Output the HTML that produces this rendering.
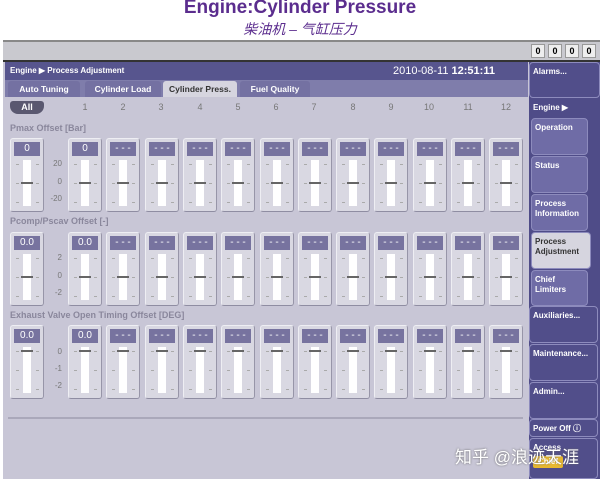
<!DOCTYPE html>
<html><head><meta charset="utf-8"><style>
*{margin:0;padding:0;box-sizing:border-box}
body{width:600px;height:479px;overflow:hidden;background:#fff;font-family:"Liberation Sans",Arial,sans-serif;position:relative}
.a{position:absolute}
.t1{left:0;width:600px;top:-3px;text-align:center;color:#5b2d8e;font-weight:bold;font-size:19px}
.t2{left:0;width:600px;top:19px;text-align:center;color:#5b2d8e;font-style:italic;font-size:14px;font-family:"Liberation Sans","Noto Sans CJK SC",sans-serif}
.frame{left:3px;top:40px;width:597px;height:439px;background:#c8c6d6}
.topbar{left:3px;top:40px;width:597px;height:22px;background:#c9c9cf;border-top:2px solid #888;border-bottom:2px solid #333}
.cnt{top:44px;width:14px;height:14px;background:#eee;border:1px solid #999;font-size:9px;font-weight:bold;text-align:center;line-height:12px}
.hdr{left:5px;top:62px;width:523px;height:18px;background:#57558e;color:#fff;font-size:8px;font-weight:bold;line-height:18px;padding-left:5px}
.tabs{left:5px;top:80px;width:523px;height:17px;background:#7f7dab}
.tab{top:81px;height:16px;background:#7471a2;color:#fff;font-size:8.5px;font-weight:bold;text-align:center;line-height:16px;border-radius:3px 3px 0 0}
.num{top:102px;width:30px;text-align:center;font-size:9px;color:#777}
.lbl{left:10px;font-size:9px;font-weight:bold;color:#8a879c}
.b{width:34px;height:74px;background:#d9d8e2;border:1px solid #eeeef3;border-right-color:#9795a8;border-bottom-color:#8f8da2;border-radius:3px}
.b .v{position:absolute;left:3px;top:3px;width:26px;height:14px;background:#77739f;color:#fff;font-size:10px;text-align:center;line-height:14px}
.b .tr{position:absolute;left:12px;top:21px;width:8px;height:46px;background:#fff}
.b .k{position:absolute;width:3px;height:1px;background:#aaa}
.b .m{position:absolute;left:10px;width:12px;height:2px;background:#666}
.sc{font-size:8px;color:#777;width:20px;text-align:right}
.sb{left:529px;width:71px;background:#4f4c88}
.btn{left:531px;width:57px;background:#6f6ca6;border-radius:4px;color:#fff;font-size:8px;font-weight:bold;padding:4px 3px;line-height:10px;border:1px solid #8d8bbd}
</style></head><body>
<div class="a t1">Engine:Cylinder Pressure</div>
<div class="a t2">柴油机 – 气缸压力</div>
<div class="a frame"></div>
<div class="a topbar"></div>
<div class="a cnt" style="left:531px">0</div><div class="a cnt" style="left:548px">0</div><div class="a cnt" style="left:565px">0</div><div class="a cnt" style="left:582px">0</div>
<div class="a hdr">Engine ▶ Process Adjustment<span style="position:absolute;left:388px;font-weight:normal;font-size:11px">2010-08-11 <b>12:51:11</b></span></div>
<div class="a tabs"></div>
<div class="a tab" style="left:8px;width:72px">Auto Tuning</div>
<div class="a tab" style="left:85px;width:76px">Cylinder Load</div>
<div class="a tab" style="left:163px;width:74px;background:#d6d5df;color:#333">Cylinder Press.</div>
<div class="a tab" style="left:240px;width:70px">Fuel Quality</div>
<div class="a" style="left:10px;top:101px;width:34px;height:13px;background:#5a5870;color:#fff;font-size:9px;font-weight:bold;text-align:center;line-height:13px;border-radius:3px 3px 8px 8px">All</div>
<div class="a num" style="left:70px">1</div><div class="a num" style="left:108px">2</div><div class="a num" style="left:146px">3</div><div class="a num" style="left:185px">4</div><div class="a num" style="left:223px">5</div><div class="a num" style="left:261px">6</div><div class="a num" style="left:299px">7</div><div class="a num" style="left:338px">8</div><div class="a num" style="left:376px">9</div><div class="a num" style="left:414px">10</div><div class="a num" style="left:453px">11</div><div class="a num" style="left:491px">12</div>
<div class="a lbl" style="top:123px">Pmax Offset [Bar]</div>
<div class="a lbl" style="top:216px">Pcomp/Pscav Offset [-]</div>
<div class="a lbl" style="top:310px">Exhaust Valve Open Timing Offset [DEG]</div>
<div class="a sc" style="left:42px;top:159px">20</div><div class="a sc" style="left:42px;top:177px">0</div><div class="a sc" style="left:42px;top:194px">-20</div>
<div class="a sc" style="left:42px;top:253px">2</div><div class="a sc" style="left:42px;top:271px">0</div><div class="a sc" style="left:42px;top:288px">-2</div>
<div class="a sc" style="left:42px;top:347px">0</div><div class="a sc" style="left:42px;top:364px">-1</div><div class="a sc" style="left:42px;top:381px">-2</div>
<div id="blocks"></div>
<div class="a" style="left:8px;top:417px;width:515px;height:2px;background:#aaa8ba"></div>
<div class="a sb" style="top:62px;height:417px"></div>
<div class="a btn" style="left:529px;top:62px;width:71px;height:36px;background:#514e8a">Alarms...</div>
<div class="a" style="left:533px;top:103px;color:#fff;font-size:8px;font-weight:bold">Engine ▶</div>
<div class="a btn" style="top:118px;height:37px">Operation</div>
<div class="a btn" style="top:156px;height:37px">Status</div>
<div class="a btn" style="top:194px;height:37px">Process Information</div>
<div class="a btn" style="top:232px;height:37px;background:#d6d5df;color:#333;width:60px">Process Adjustment</div>
<div class="a btn" style="top:270px;height:36px">Chief Limiters</div>
<div class="a btn" style="left:529px;top:306px;width:69px;height:37px;background:#514e8a">Auxiliaries...</div>
<div class="a btn" style="left:529px;top:344px;width:69px;height:37px;background:#514e8a">Maintenance...</div>
<div class="a btn" style="left:529px;top:382px;width:69px;height:37px;background:#514e8a">Admin...</div>
<div class="a btn" style="left:529px;top:419px;width:69px;height:18px;background:#514e8a">Power Off ⓘ</div>
<div class="a btn" style="left:529px;top:438px;width:69px;height:41px;background:#514e8a">Access</div>
<div class="a" style="left:533px;top:456px;width:30px;height:12px;background:#e8b830;color:#fff;font-size:8px;font-weight:bold;text-align:center;line-height:12px;border-radius:2px">Chief</div>
<div class="a" style="left:455px;top:443px;color:#fff;font-size:17px;font-family:'Liberation Sans','Noto Sans CJK SC',sans-serif;text-shadow:0 0 2px #666">知乎 @浪迹天涯</div>
<script>
var xs=[10,68,106,145,183,221,260,298,336,374,413,451,489],tops=[138,232,325],h='';
tops.forEach(function(t,s){xs.forEach(function(x,i){
var v=i<2?(s==0?'0':'0.0'):'- - -';
var my=s==2?24:43;
h+='<div class="a b" style="left:'+x+'px;top:'+t+'px"><div class="v">'+v+'</div><div class="tr"></div>';
[25,44,63].forEach(function(y){h+='<div class="k" style="left:5px;top:'+y+'px"></div><div class="k" style="left:25px;top:'+y+'px"></div>';});
h+='<div class="m" style="top:'+my+'px"></div></div>';});});
document.getElementById('blocks').innerHTML=h;
</script>
</body></html>
